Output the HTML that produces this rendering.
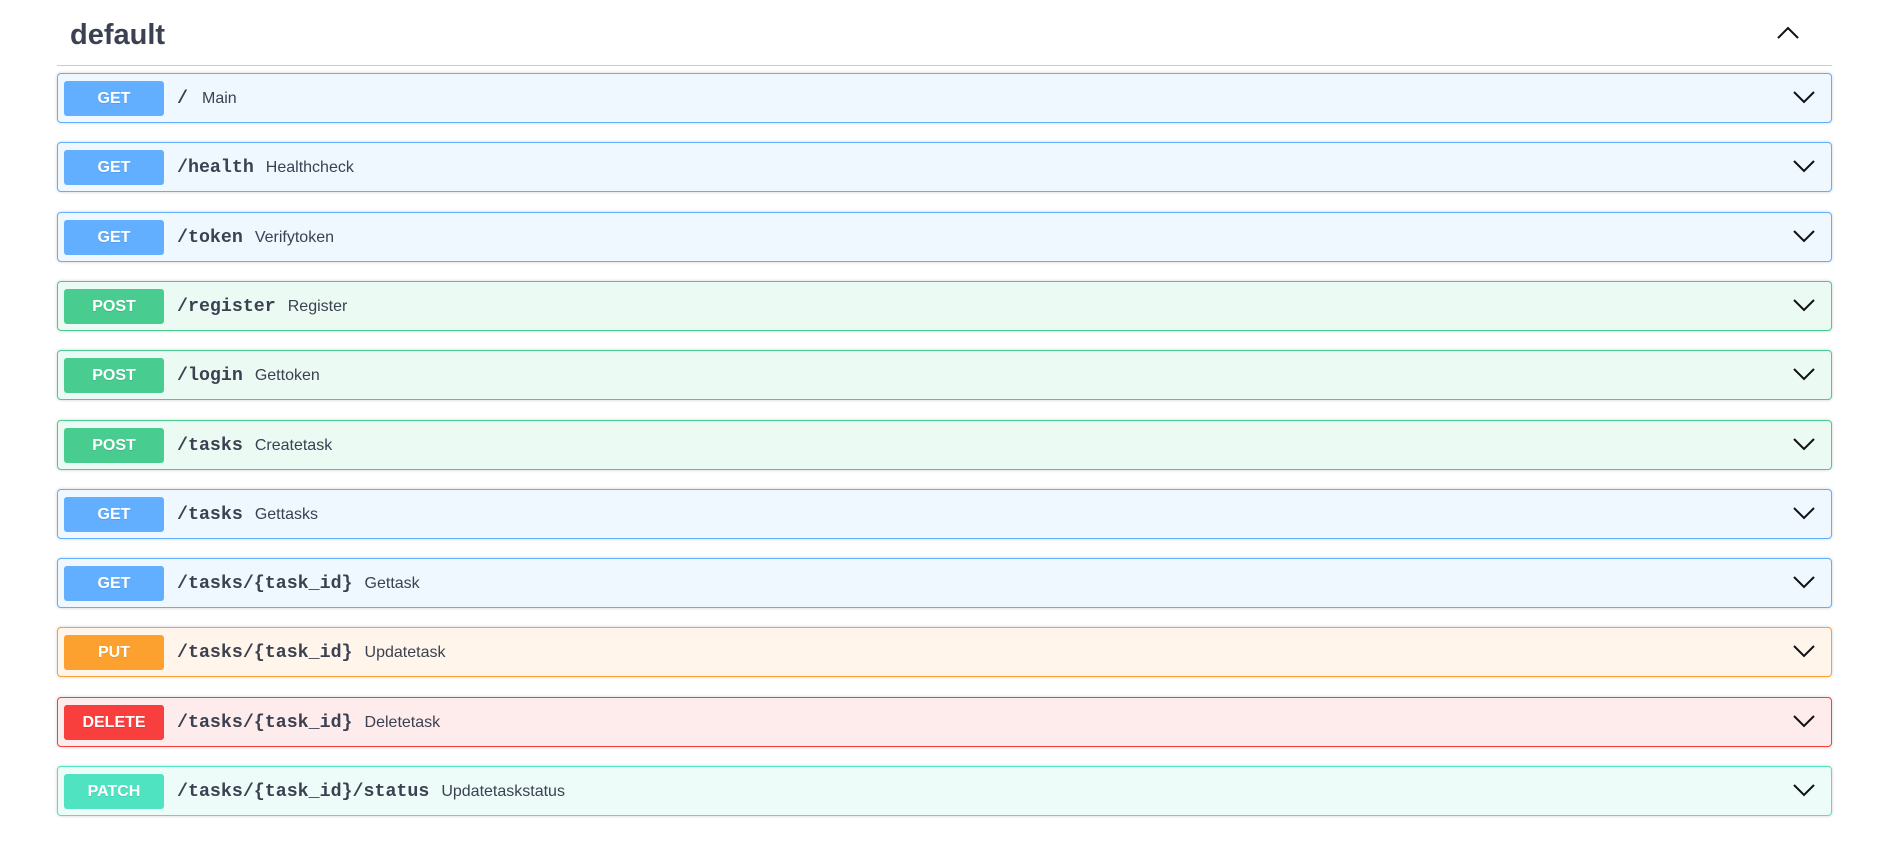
<!DOCTYPE html>
<html><head><meta charset="utf-8"><style>
html,body{margin:0;padding:0;background:#fff;width:1883px;height:844px;overflow:hidden;font-family:"Liberation Sans",sans-serif;color:#3b4151}
.h{position:absolute;left:57px;top:0;width:1775px;height:66px;border-bottom:1px solid #ccc;box-sizing:border-box}
.h span{position:absolute;left:13px;top:19px;font-size:29px;font-weight:bold}
.h svg{position:absolute;left:1719px;top:25px}
.r{position:absolute;left:57px;width:1775px;height:50px;box-sizing:border-box;border:1px solid;border-radius:4px;box-shadow:0 0 3px rgba(0,0,0,.19)}
.b{position:absolute;left:6px;top:7px;width:100px;height:35px;border-radius:3px;color:#fff;font-weight:bold;font-size:16px;text-align:center;line-height:35px;text-shadow:0 1px 0 rgba(0,0,0,.1)}
.p{position:absolute;left:119px;top:14px;font-family:"Liberation Mono",monospace;font-weight:bold;font-size:18.3px;line-height:22px;white-space:nowrap}
.p i{font-style:normal;font-family:"Liberation Sans",sans-serif;font-weight:normal;font-size:16px;margin-left:12px}
.r svg{position:absolute;left:1734px;top:15px}
.g{border-color:#61affe;background:#eff7ff}.g .b{background:#61affe}
.po{border-color:#49cc90;background:#ecfaf4}.po .b{background:#49cc90}
.pu{border-color:#fca130;background:#fff5ea}.pu .b{background:#fca130}
.d{border-color:#f93e3e;background:#feebeb}.d .b{background:#f93e3e}
.pa{border-color:#50e3c2;background:#edfcf9}.pa .b{background:#50e3c2}
</style></head><body>
<div class="h"><span>default</span><svg width="24" height="16" viewBox="0 0 24 16"><path d="M2 13 L12 3 L22 13" fill="none" stroke="#111" stroke-width="2"/></svg></div>
<div class="r g" style="top:73px"><div class="b">GET</div><div class="p">/<i style="margin-left:14px">Main</i></div><svg width="24" height="16"><path d="M2 3 L12 13 L22 3" fill="none" stroke="#111" stroke-width="2"/></svg></div>
<div class="r g" style="top:142px"><div class="b">GET</div><div class="p">/health<i>Healthcheck</i></div><svg width="24" height="16"><path d="M2 3 L12 13 L22 3" fill="none" stroke="#111" stroke-width="2"/></svg></div>
<div class="r g" style="top:212px"><div class="b">GET</div><div class="p">/token<i>Verifytoken</i></div><svg width="24" height="16"><path d="M2 3 L12 13 L22 3" fill="none" stroke="#111" stroke-width="2"/></svg></div>
<div class="r po" style="top:281px"><div class="b">POST</div><div class="p">/register<i>Register</i></div><svg width="24" height="16"><path d="M2 3 L12 13 L22 3" fill="none" stroke="#111" stroke-width="2"/></svg></div>
<div class="r po" style="top:350px"><div class="b">POST</div><div class="p">/login<i>Gettoken</i></div><svg width="24" height="16"><path d="M2 3 L12 13 L22 3" fill="none" stroke="#111" stroke-width="2"/></svg></div>
<div class="r po" style="top:420px"><div class="b">POST</div><div class="p">/tasks<i>Createtask</i></div><svg width="24" height="16"><path d="M2 3 L12 13 L22 3" fill="none" stroke="#111" stroke-width="2"/></svg></div>
<div class="r g" style="top:489px"><div class="b">GET</div><div class="p">/tasks<i>Gettasks</i></div><svg width="24" height="16"><path d="M2 3 L12 13 L22 3" fill="none" stroke="#111" stroke-width="2"/></svg></div>
<div class="r g" style="top:558px"><div class="b">GET</div><div class="p">/tasks/{task_id}<i>Gettask</i></div><svg width="24" height="16"><path d="M2 3 L12 13 L22 3" fill="none" stroke="#111" stroke-width="2"/></svg></div>
<div class="r pu" style="top:627px"><div class="b">PUT</div><div class="p">/tasks/{task_id}<i>Updatetask</i></div><svg width="24" height="16"><path d="M2 3 L12 13 L22 3" fill="none" stroke="#111" stroke-width="2"/></svg></div>
<div class="r d" style="top:697px"><div class="b">DELETE</div><div class="p">/tasks/{task_id}<i>Deletetask</i></div><svg width="24" height="16"><path d="M2 3 L12 13 L22 3" fill="none" stroke="#111" stroke-width="2"/></svg></div>
<div class="r pa" style="top:766px"><div class="b">PATCH</div><div class="p">/tasks/{task_id}/status<i>Updatetaskstatus</i></div><svg width="24" height="16"><path d="M2 3 L12 13 L22 3" fill="none" stroke="#111" stroke-width="2"/></svg></div>
</body></html>
